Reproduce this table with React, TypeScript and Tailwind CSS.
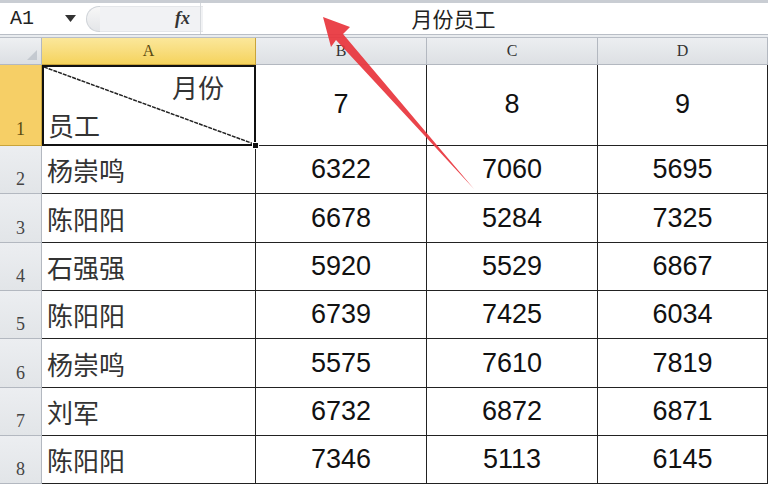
import React from 'react';

const cols = ['A', 'B', 'C', 'D'];

const rows: [string, string, string, string][] = [
  ['杨崇鸣', '6322', '7060', '5695'],
  ['陈阳阳', '6678', '5284', '7325'],
  ['石强强', '5920', '5529', '6867'],
  ['陈阳阳', '6739', '7425', '6034'],
  ['杨崇鸣', '5575', '7610', '7819'],
  ['刘军', '6732', '6872', '6871'],
  ['陈阳阳', '7346', '5113', '6145'],
];

const serif = "font-['Liberation_Serif','DejaVu_Serif',serif]";
const cjk = "font-['Noto_Sans_CJK_SC','Noto_Sans',sans-serif]";
const num = "font-['Liberation_Sans','Arial',sans-serif]";

function FormulaBar() {
  return (
    <div className="flex h-[34px] items-stretch border-t-[3px] border-[#c9cdd3] bg-white">
      <div className="flex w-[86px] items-center justify-between pl-[10px] pr-[10px]">
        <span className="font-['Liberation_Mono','DejaVu_Sans_Mono',monospace] text-[20px] text-[#222]">A1</span>
        <svg width="11" height="7" viewBox="0 0 11 7">
          <path d="M0 0 L11 0 L5.5 7 Z" fill="#333" />
        </svg>
      </div>
      <div className="flex w-[114px] items-center">
        <div className="h-[26px] w-[14px] rounded-l-full border-y border-l border-[#cfd3d8] bg-gradient-to-b from-[#f7f7f7] to-[#e4e6e9]" />
        <div className="h-[26px] flex-1 border-y border-[#e4e6e9] bg-[#f1f2f4]" />
        <span className={`${serif} -ml-[28px] mr-[10px] text-[18px] font-bold italic text-[#333]`}>fx</span>
      </div>
      <div className={`${cjk} flex flex-1 items-center justify-center border-l border-[#d6d9dd] pr-[62px] text-[21px] text-[#222]`}>
        月份员工
      </div>
    </div>
  );
}

function Arrow() {
  return (
    <svg className="pointer-events-none absolute left-0 top-0" width="768" height="486" viewBox="0 0 768 486">
      <polygon
        points="323,17 350,27 343,34 474,189 336,40 331,47"
        fill="#e8343c"
        opacity="0.92"
      />
    </svg>
  );
}

export default function App() {
  return (
    <div className="relative h-[486px] w-[768px] overflow-hidden bg-white">
      <FormulaBar />
      <div className="h-[4px] border-y border-[#b9bec6] bg-[#e9ecef]" />
      <div className="grid grid-cols-[42px_214px_171px_171px_170px] grid-rows-[27px_81px_48px_49px_48px_48px_49px_48px_48px]">
        <div className="relative border-b border-r border-[#b3b8c0] bg-gradient-to-b from-[#eef0f2] to-[#dcdfe3]">
          <svg className="absolute bottom-[4px] right-[4px]" width="10" height="10" viewBox="0 0 10 10">
            <path d="M10 0 L10 10 L0 10 Z" fill="#c4c9d0" />
          </svg>
        </div>
        {cols.map((c) => (
          <div
            key={c}
            className={`${serif} flex items-center justify-center border-b border-r text-[16px] ${
              c === 'A'
                ? 'border-[#c9a43a] bg-gradient-to-b from-[#fbe79a] to-[#f5d35c] text-[#5a4a10]'
                : 'border-[#b3b8c0] bg-gradient-to-b from-[#eceef1] to-[#dde0e4] text-[#333]'
            }`}
          >
            {c}
          </div>
        ))}

        <div className={`${serif} flex items-end justify-center border-b border-r border-[#c9a43a] bg-[#f6cf66] pb-[2px] text-[18px] text-[#5a4a10]`}>
          1
        </div>
        <div className={`${cjk} relative border-[2px] border-[#111] bg-white text-[26px] text-[#333]`}>
          <svg className="absolute inset-0 h-full w-full" preserveAspectRatio="none" viewBox="0 0 100 100">
            <line x1="0" y1="0" x2="100" y2="100" stroke="#222" strokeWidth="1.5" vectorEffect="non-scaling-stroke" strokeDasharray="4 1" />
          </svg>
          <span className="absolute right-[30px] top-[0px]">月份</span>
          <span className="absolute bottom-[0px] left-[4px]">员工</span>
          <div className="absolute -bottom-[5px] -right-[5px] h-[7px] w-[7px] border border-white bg-[#111]" />
        </div>
        {['7', '8', '9'].map((v) => (
          <div key={v} className={`${num} flex items-center justify-center border-b border-r border-[#222] pb-[2px] text-[27px] text-[#111]`}>
            {v}
          </div>
        ))}

        {rows.map((r, i) => (
          <React.Fragment key={i}>
            <div className={`${serif} flex items-end justify-center border-b border-r border-[#b3b8c0] bg-gradient-to-b from-[#eceef1] to-[#e2e5e8] text-[18px] text-[#444]`}>
              {i + 2}
            </div>
            <div className={`${cjk} flex items-center border-b border-r border-[#222] pl-[5px] text-[26px] text-[#333]`}>
              {r[0]}
            </div>
            {r.slice(1).map((v, j) => (
              <div key={j} className={`${num} flex items-center justify-center border-b border-r border-[#222] text-[27px] text-[#111]`}>
                {v}
              </div>
            ))}
          </React.Fragment>
        ))}
      </div>
      <Arrow />
    </div>
  );
}
